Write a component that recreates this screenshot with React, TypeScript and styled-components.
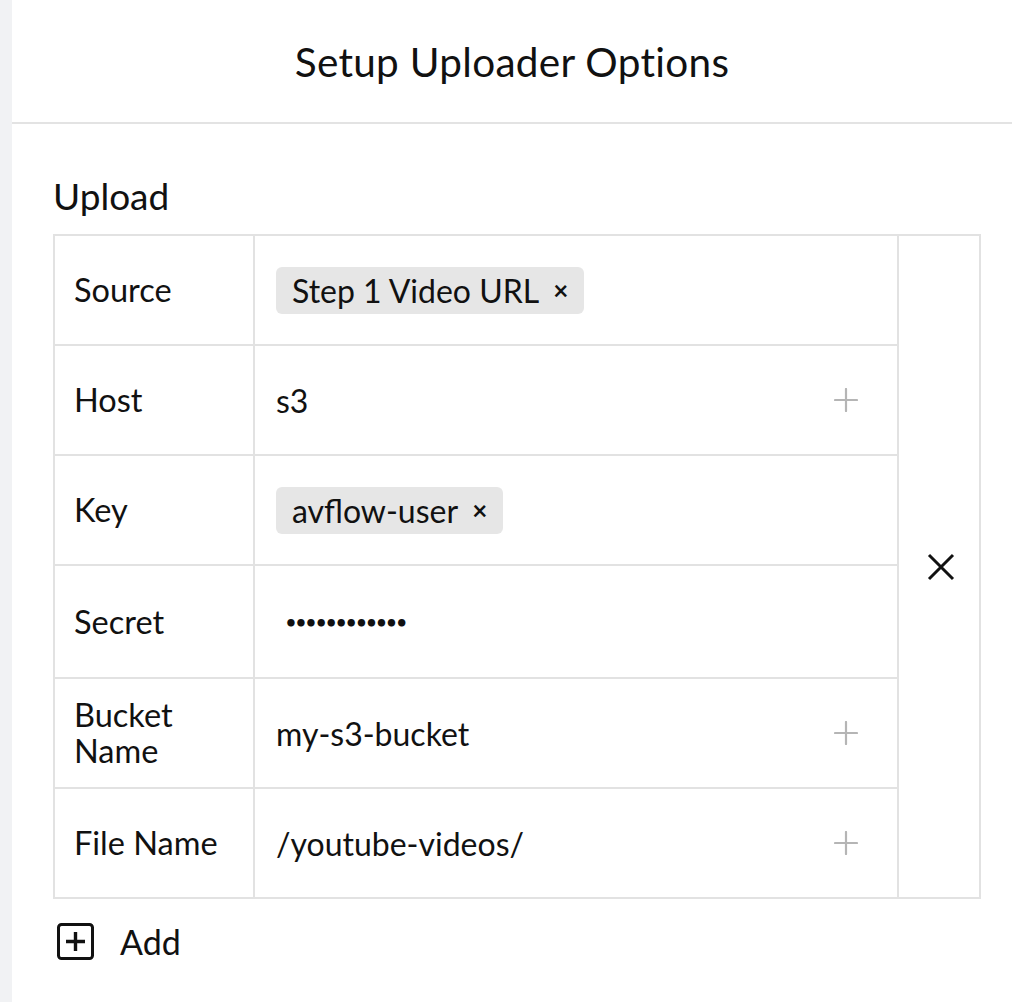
import React from 'react';
import styled, { createGlobalStyle } from 'styled-components';

const GlobalStyle = createGlobalStyle`
  html, body {
    margin: 0;
    padding: 0;
    background: #ffffff;
  }
  body {
    font-family: Lato, "Open Sans", sans-serif;
    color: #111111;
  }
`;

const Page = styled.div`
  display: flex;
  min-height: 1002px;
`;

const SideStrip = styled.div`
  width: 12px;
  flex-shrink: 0;
  background-color: #f1f2f4;
`;

const Main = styled.div`
  flex: 1;
  display: flex;
  flex-direction: column;
`;

const Header = styled.header`
  height: 122px;
  border-bottom: 2px solid #e3e3e3;
  display: flex;
  align-items: center;
  justify-content: center;
`;

const Title = styled.h1`
  margin: 0;
  font-size: 40.5px;
  font-weight: 400;
  letter-spacing: 0.3px;
`;

const Content = styled.section`
  padding: 50px 31px 0 41px;
`;

const SectionLabel = styled.h2`
  margin: 0 0 16px;
  font-size: 37px;
  font-weight: 400;
  line-height: 44px;
`;

const Table = styled.div`
  display: flex;
  border: 2px solid #e2e2e2;
`;

const Fields = styled.div`
  flex: 1;
  display: flex;
  flex-direction: column;
`;

const Row = styled.div<{ $tall?: boolean }>`
  display: grid;
  grid-template-columns: 200px 1fr;
  height: ${({ $tall }) => ($tall ? '111px' : '108px')};
  border-bottom: 2px solid #e2e2e2;
  &:last-child {
    border-bottom: none;
  }
`;

const LabelCell = styled.div`
  display: flex;
  align-items: center;
  padding-left: 19px;
  border-right: 2px solid #e2e2e2;
  font-size: 32.5px;
  line-height: 36px;
  white-space: pre-line;
`;

const ValueCell = styled.div`
  display: flex;
  align-items: center;
  justify-content: space-between;
  padding: 0 39px 0 21px;
  font-size: 32px;
`;

const Chip = styled.span`
  display: inline-flex;
  align-items: center;
  gap: 14px;
  height: 47px;
  padding: 0 16px 0 16px;
  border-radius: 6px;
  background-color: #e6e6e6;
  font-size: 32px;
`;

const ChipClose = styled.span`
  font-size: 26px;
  font-weight: 700;
  line-height: 1;
`;

const Dots = styled.span`
  padding-left: 10px;
  font-size: 17px;
  letter-spacing: 0.2px;
  font-weight: 700;
`;

const ActionCell = styled.div`
  width: 82px;
  flex-shrink: 0;
  border-left: 2px solid #e2e2e2;
  display: flex;
  align-items: center;
  justify-content: center;
  padding-left: 3px;
  box-sizing: border-box;
`;

const AddRow = styled.div`
  display: flex;
  align-items: center;
  gap: 26px;
  margin-top: 22px;
  padding-left: 4px;
  font-size: 34px;
`;

const PlusIcon = () => (
  <svg width="24" height="24" viewBox="0 0 24 24">
    <path d="M12 1v22M1 12h22" stroke="#b5b5b5" strokeWidth="2.2" strokeLinecap="round" />
  </svg>
);

const CloseIcon = () => (
  <svg width="30" height="30" viewBox="0 0 30 30">
    <path d="M3 3l24 24M27 3L3 27" stroke="#111" strokeWidth="3" />
  </svg>
);

const AddBoxIcon = () => (
  <svg width="37" height="37" viewBox="0 0 37 37">
    <rect x="1.5" y="1.5" width="34" height="34" rx="3" fill="none" stroke="#111" strokeWidth="3" />
    <path d="M18.5 9v19M9 18.5h19" stroke="#111" strokeWidth="3.4" />
  </svg>
);

type Field = {
  label: string;
  chip?: string;
  text?: string;
  secret?: boolean;
  addable?: boolean;
};

const fields: Field[] = [
  { label: 'Source', chip: 'Step 1 Video URL' },
  { label: 'Host', text: 's3', addable: true },
  { label: 'Key', chip: 'avflow-user' },
  { label: 'Secret', secret: true },
  { label: 'Bucket\nName', text: 'my-s3-bucket', addable: true },
  { label: 'File Name', text: '/youtube-videos/', addable: true },
];

const App = () => {
  return (
    <Page>
      <GlobalStyle />
      <SideStrip />
      <Main>
        <Header>
          <Title>Setup Uploader Options</Title>
        </Header>
        <Content>
          <SectionLabel>Upload</SectionLabel>
          <Table>
            <Fields>
              {fields.map((f) => (
                <Row key={f.label} $tall={f.secret}>
                  <LabelCell>{f.label}</LabelCell>
                  <ValueCell>
                    {f.chip && (
                      <Chip>
                        {f.chip}
                        <ChipClose>×</ChipClose>
                      </Chip>
                    )}
                    {f.text && <span>{f.text}</span>}
                    {f.secret && <Dots>••••••••••••</Dots>}
                    {f.addable && <PlusIcon />}
                  </ValueCell>
                </Row>
              ))}
            </Fields>
            <ActionCell>
              <CloseIcon />
            </ActionCell>
          </Table>
          <AddRow>
            <AddBoxIcon />
            <span>Add</span>
          </AddRow>
        </Content>
      </Main>
    </Page>
  );
};

export default App;
